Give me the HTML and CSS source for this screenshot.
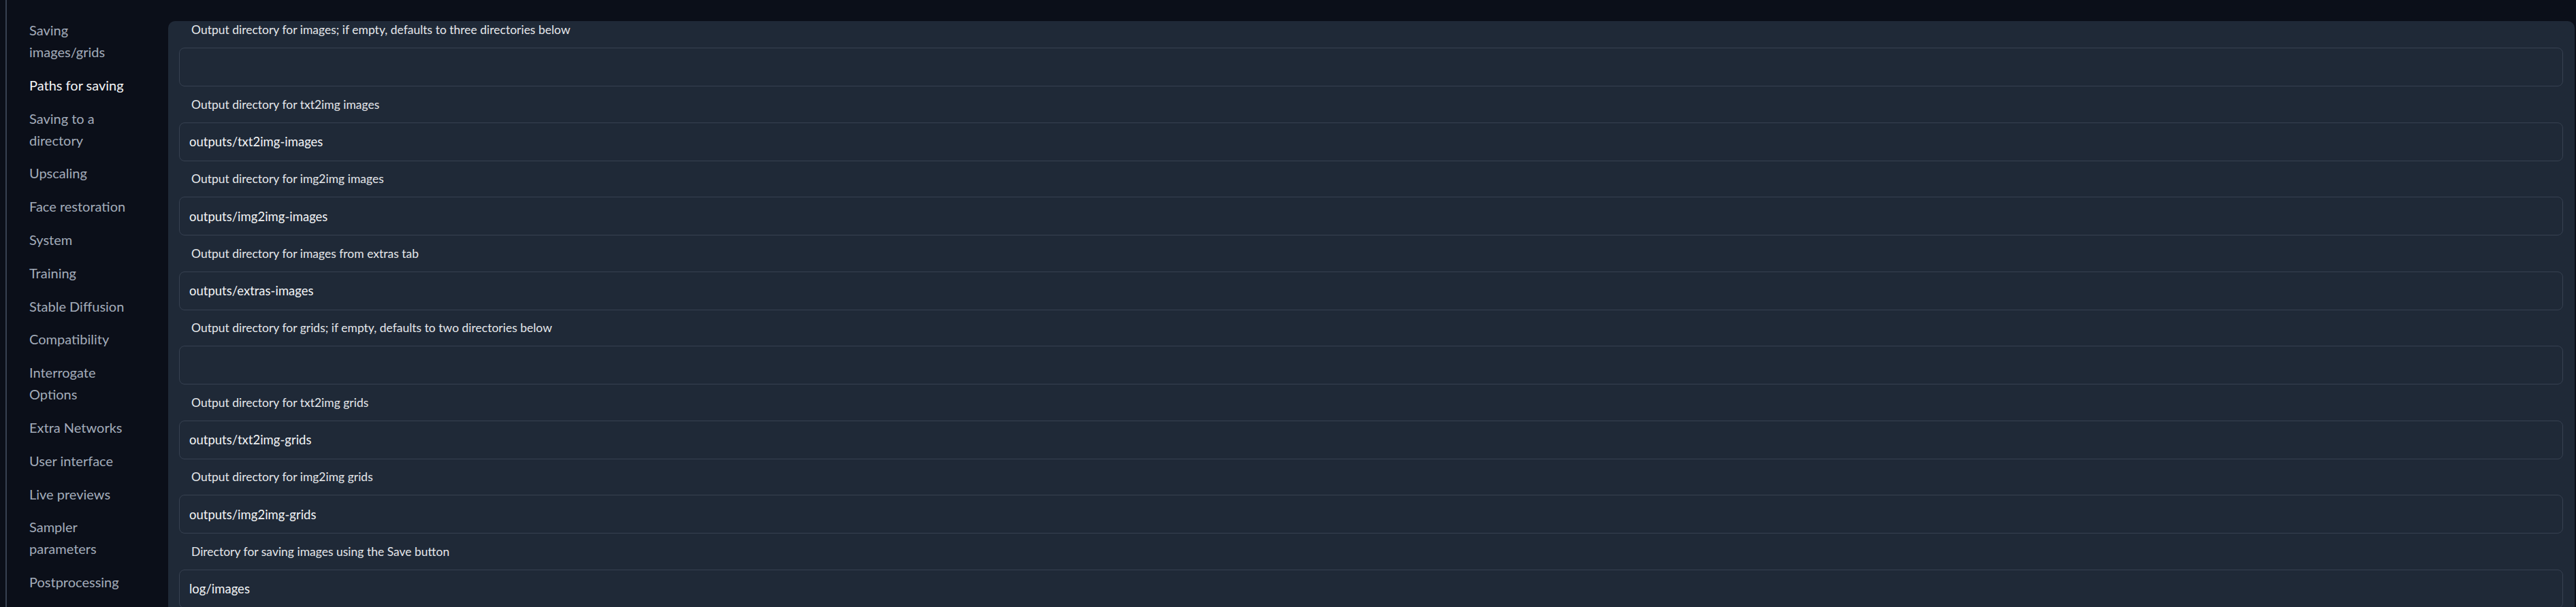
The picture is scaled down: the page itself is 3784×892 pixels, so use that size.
FILE: index.html
```html
<!DOCTYPE html>
<html lang="en">
<head>
    <meta charset="UTF-8">
    <meta name="viewport" content="width=device-width, initial-scale=1.0">
    <title>Settings - Paths for saving</title>
    <link rel="stylesheet" href="styles.css">
</head>
<body>

    <div class="settings">
        <!-- Section list -->
        <nav class="sections">
            <div class="section">Saving images/grids</div>
            <div class="section active">Paths for saving</div>
            <div class="section">Saving to a directory</div>
            <div class="section">Upscaling</div>
            <div class="section">Face restoration</div>
            <div class="section">System</div>
            <div class="section">Training</div>
            <div class="section">Stable Diffusion</div>
            <div class="section">Compatibility</div>
            <div class="section">Interrogate Options</div>
            <div class="section">Extra Networks</div>
            <div class="section">User interface</div>
            <div class="section">Live previews</div>
            <div class="section">Sampler parameters</div>
            <div class="section">Postprocessing</div>
        </nav>

        <!-- Options for the selected section -->
        <main class="panel">
            <div class="field">
                <label class="field-label">Output directory for images; if empty, defaults to three directories below</label>
                <input class="field-input" type="text" value="">
            </div>
            <div class="field">
                <label class="field-label">Output directory for txt2img images</label>
                <input class="field-input" type="text" value="outputs/txt2img-images">
            </div>
            <div class="field">
                <label class="field-label">Output directory for img2img images</label>
                <input class="field-input" type="text" value="outputs/img2img-images">
            </div>
            <div class="field">
                <label class="field-label">Output directory for images from extras tab</label>
                <input class="field-input" type="text" value="outputs/extras-images">
            </div>
            <div class="field">
                <label class="field-label">Output directory for grids; if empty, defaults to two directories below</label>
                <input class="field-input" type="text" value="">
            </div>
            <div class="field">
                <label class="field-label">Output directory for txt2img grids</label>
                <input class="field-input" type="text" value="outputs/txt2img-grids">
            </div>
            <div class="field">
                <label class="field-label">Output directory for img2img grids</label>
                <input class="field-input" type="text" value="outputs/img2img-grids">
            </div>
            <div class="field">
                <label class="field-label">Directory for saving images using the Save button</label>
                <input class="field-input" type="text" value="log/images">
            </div>
        </main>
    </div>

</body>
</html>
```

FILE: styles.css
```css
html, body { height: 100%; }
body {
    margin: 0;
    padding-left: 8px;
    background-color: #0b0f19;
    font-family: Lato, "Noto Sans", sans-serif;
    overflow: hidden;
}
.settings {
    display: flex;
    height: 100%;
    border-left: 2px solid #374151;
}

/* section list */
.sections {
    width: 204px;
    flex-shrink: 0;
    padding: 28px 0 0 33px;
    display: flex;
    flex-direction: column;
    gap: 16.8px;
}
.section {
    width: 170px;
    font-size: 20px;
    line-height: 32px;
    color: #a3acba;
    cursor: pointer;
}
.section.active { color: #f3f4f6; }

/* options panel */
.panel {
    flex: 1;
    margin: 31px 2px 0 0;
    padding: 0 17px 0 16px;
    background-color: #1f2937;
    border-radius: 10px 10px 0 0;
    display: flex;
    flex-direction: column;
    gap: 13.5px;
}
.field { display: flex; flex-direction: column; }
.field-label {
    height: 39px;
    padding-left: 18px;
    font-size: 17.5px;
    line-height: 26px;
    color: #e5e7eb;
}
.field-input {
    box-sizing: border-box;
    height: 57px;
    margin: 0;
    padding: 0 14px;
    border: 1px solid #374151;
    border-radius: 8px;
    background-color: #1f2937;
    font-family: inherit;
    font-size: 18.5px;
    color: #f3f4f6;
    outline: none;
}
```
